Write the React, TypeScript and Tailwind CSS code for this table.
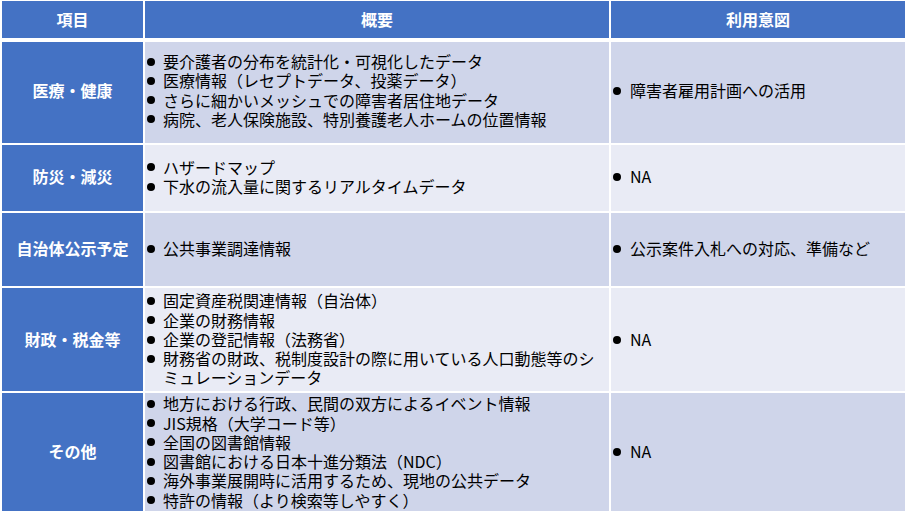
import React from "react";

type Row = { label: string; items: string[][]; uses: string[]; bg: string; h: string; pb: string };

const rows: Row[] = [
  {
    label: "医療・健康",
    items: [
      ["要介護者の分布を統計化・可視化したデータ"],
      ["医療情報（レセプトデータ、投薬データ）"],
      ["さらに細かいメッシュでの障害者居住地データ"],
      ["病院、老人保険施設、特別養護老人ホームの位置情報"],
    ],
    uses: ["障害者雇用計画への活用"],
    bg: "bg-[#cfd5ea]",
    h: "h-[101px]",
    pb: "pb-[4px]",
  },
  {
    label: "防災・減災",
    items: [["ハザードマップ"], ["下水の流入量に関するリアルタイムデータ"]],
    uses: ["NA"],
    bg: "bg-[#e9ebf5]",
    h: "h-[66px]",
    pb: "pb-[2px]",
  },
  {
    label: "自治体公示予定",
    items: [["公共事業調達情報"]],
    uses: ["公示案件入札への対応、準備など"],
    bg: "bg-[#cfd5ea]",
    h: "h-[73px]",
    pb: "pb-[1px]",
  },
  {
    label: "財政・税金等",
    items: [
      ["固定資産税関連情報（自治体）"],
      ["企業の財務情報"],
      ["企業の登記情報（法務省）"],
      ["財務省の財政、税制度設計の際に用いている人口動態等のシ", "ミュレーションデータ"],
    ],
    uses: ["NA"],
    bg: "bg-[#e9ebf5]",
    h: "h-[103px]",
    pb: "pb-0",
  },
  {
    label: "その他",
    items: [
      ["地方における行政、民間の双方によるイベント情報"],
      ["JIS規格（大学コード等）"],
      ["全国の図書館情報"],
      ["図書館における日本十進分類法（NDC）"],
      ["海外事業展開時に活用するため、現地の公共データ"],
      ["特許の情報（より検索等しやすく）"],
    ],
    uses: ["NA"],
    bg: "bg-[#cfd5ea]",
    h: "h-[118px]",
    pb: "pb-0",
  },
];

function Bullet({ lines, indent }: { lines: string[]; indent: string }) {
  return (
    <div className="flex items-start">
      <div className={`${indent} h-[19.25px] flex items-center shrink-0`}>
        <span className="ml-[2px] w-[8px] h-[8px] rounded-full bg-black block" />
      </div>
      <div>
        {lines.map((l, i) => (
          <div key={i} className="whitespace-nowrap">
            {l}
          </div>
        ))}
      </div>
    </div>
  );
}

export default function App() {
  return (
    <div
      className="w-[908px] h-[514px] bg-white pl-[2px] pt-[1px]"
      style={{ fontFamily: '"Noto Sans CJK JP", "Noto Sans", sans-serif' }}
    >
      <div className="grid grid-cols-[141px_464px_294px] gap-x-[2px] gap-y-[2px] text-[16px] leading-[19.25px] text-black">
        <div className="h-[37px] bg-[#4472c4] text-white font-bold flex items-center justify-center">項目</div>
        <div className="h-[37px] bg-[#4472c4] text-white font-bold flex items-center justify-center">概要</div>
        <div className="h-[37px] bg-[#4472c4] text-white font-bold flex items-center justify-center">利用意図</div>
        <div className="col-span-3 h-0" />
        {rows.map((r, idx) => (
          <React.Fragment key={idx}>
            <div className={`${r.h} ${r.pb} bg-[#4472c4] text-white font-bold flex items-center justify-center`}>
              {r.label}
            </div>
            <div className={`${r.h} ${r.pb} ${r.bg} flex flex-col justify-center`}>
              {r.items.map((it, i) => (
                <Bullet key={i} lines={it} indent="w-[18px]" />
              ))}
            </div>
            <div className={`${r.h} ${r.pb} ${r.bg} flex flex-col justify-center`}>
              {r.uses.map((u, i) => (
                <Bullet key={i} lines={[u]} indent="w-[19px]" />
              ))}
            </div>
          </React.Fragment>
        ))}
      </div>
    </div>
  );
}
